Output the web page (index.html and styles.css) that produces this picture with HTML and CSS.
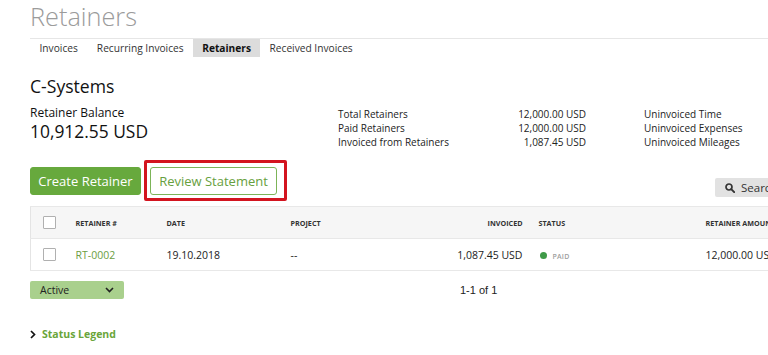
FILE: index.html
```html
<!DOCTYPE html>
<html>
<head>
<meta charset="utf-8">
<link rel="stylesheet" href="styles.css">
</head>
<body>
<div class="page">
  <div class="titlebar"><h1 class="title">Retainers</h1></div>
  <nav class="tabs">
    <span class="tab">Invoices</span>
    <span class="tab">Recurring Invoices</span>
    <span class="tab active">Retainers</span>
    <span class="tab">Received Invoices</span>
  </nav>
  <h2 class="client">C-Systems</h2>
  <div class="summary">
    <div class="balance">
      <div class="balance-label">Retainer Balance</div>
      <div class="balance-amount">10,912.55 USD</div>
    </div>
    <div class="totals">
      <div class="t-label">Total Retainers</div><div class="t-value">12,000.00 USD</div><div class="t-extra">Uninvoiced Time</div>
      <div class="t-label">Paid Retainers</div><div class="t-value">12,000.00 USD</div><div class="t-extra">Uninvoiced Expenses</div>
      <div class="t-label">Invoiced from Retainers</div><div class="t-value">1,087.45 USD</div><div class="t-extra">Uninvoiced Mileages</div>
    </div>
  </div>
  <div class="actions">
    <button class="btn btn-primary">Create Retainer</button>
    <div class="highlight-wrap">
      <button class="btn btn-outline">Review Statement</button>
      <span class="highlight"></span>
    </div>
    <button class="btn-search">
      <svg class="search-icon" width="10" height="10" viewBox="0 0 10 10"><circle cx="4" cy="4" r="3" fill="none" stroke="#333" stroke-width="1.7"/><line x1="6.2" y1="6.2" x2="9.2" y2="9.2" stroke="#333" stroke-width="1.9" stroke-linecap="round"/></svg>
      <span>Search</span>
    </button>
  </div>
  <table class="grid">
    <colgroup>
      <col class="c-check"><col class="c-num"><col class="c-date"><col class="c-proj"><col class="c-inv"><col class="c-status"><col class="c-amt">
    </colgroup>
    <thead>
      <tr>
        <th><span class="checkbox"></span></th>
        <th>Retainer #</th>
        <th>Date</th>
        <th>Project</th>
        <th class="right inv">Invoiced</th>
        <th class="status">Status</th>
        <th>Retainer Amount</th>
      </tr>
    </thead>
    <tbody>
      <tr>
        <td><span class="checkbox"></span></td>
        <td class="link">RT-0002</td>
        <td>19.10.2018</td>
        <td>--</td>
        <td class="right inv">1,087.45 USD</td>
        <td class="status"><span class="dot"></span><span class="paid">PAID</span></td>
        <td>12,000.00 USD</td>
      </tr>
    </tbody>
  </table>
  <div class="footer">
    <div class="select">
      <span>Active</span>
      <svg width="9" height="6" viewBox="0 0 9 6"><polyline points="1,1 4.5,4.5 8,1" fill="none" stroke="#222" stroke-width="1.6"/></svg>
    </div>
    <div class="pager">1-1 of 1</div>
  </div>
  <div class="legend">
    <svg width="6" height="9" viewBox="0 0 6 9"><polyline points="1,1 4.5,4.5 1,8" fill="none" stroke="#111" stroke-width="1.7"/></svg>
    <span>Status Legend</span>
  </div>
</div>
</body>
</html>
```
FILE: styles.css
```css
html, body {
  margin: 0;
  padding: 0;
  overflow: hidden;
  background: #fff;
}
body {
  font-family: "Open Sans", "Liberation Sans", sans-serif;
  color: #222;
  width: 768px;
  height: 355px;
}
.page {
  padding-left: 30px;
  width: 830px;
  white-space: nowrap;
}
.titlebar {
  border-bottom: 1px solid #e6e6e6;
  height: 38px;
}
.title {
  margin: 0;
  font-size: 25.3px;
  line-height: 32px;
  font-weight: 300;
  color: #9b9b9b;
}
.tabs {
  display: flex;
  height: 18px;
}
.tab {
  font-size: 10.2px;
  line-height: 18px;
  padding: 0 9.5px;
  color: #333;
}
.tab.active {
  background: #dcdcdc;
  font-weight: 700;
  color: #111;
  padding: 0 9px;
}
.client {
  margin: 17px 0 0;
  font-size: 17.6px;
  line-height: 24px;
  font-weight: 400;
  color: #111;
}
.summary {
  display: flex;
  margin-top: 7px;
}
.balance {
  width: 308px;
}
.balance-label {
  font-size: 12px;
  line-height: 15px;
  color: #111;
}
.balance-amount {
  font-size: 17.4px;
  line-height: 22px;
  color: #111;
}
.totals {
  display: grid;
  grid-template-columns: 170px 78px 150px;
  padding-top: 2px;
  font-size: 10px;
  line-height: 14px;
  color: #222;
}
.t-value {
  text-align: right;
}
.t-extra {
  padding-left: 58px;
}
.actions {
  display: flex;
  align-items: flex-end;
  margin-top: 18px;
  height: 29px;
}
.btn {
  font-family: "Open Sans", "Liberation Sans", sans-serif;
  font-size: 13px;
  height: 28px;
  border-radius: 3px;
  padding: 0 10px;
  margin: 0;
  line-height: 26px;
  white-space: nowrap;
  box-sizing: border-box;
}
.btn-primary {
  background: #67a93d;
  color: #fff;
  border: 1px solid #67a93d;
  width: 111px;
  padding: 0;
  align-self: flex-start;
}
.highlight-wrap {
  position: relative;
  margin-left: 9px;
  align-self: flex-start;
  height: 28px;
}
.btn-outline {
  background: #fff;
  color: #67a040;
  border: 1px solid #7cb458;
  width: 127px;
  padding: 0;
}
.highlight {
  position: absolute;
  left: -6px;
  top: -7px;
  width: 137px;
  height: 35px;
  border: 3px solid #d3141f;
  border-radius: 2px;
}
.btn-search {
  margin-left: 438px;
  flex: none;
  width: 90px;
  height: 19px;
  background: #e2e2e2;
  border: 0;
  border-radius: 2px;
  display: flex;
  align-items: center;
  padding: 0 0 0 10px;
  font-family: "Open Sans", "Liberation Sans", sans-serif;
  font-size: 11.5px;
  color: #333;
  margin-bottom: -1px;
}
.search-icon {
  margin-right: 6px;
}
.grid {
  margin-top: 10px;
  border-collapse: collapse;
  table-layout: fixed;
  width: 800px;
  border-left: 1px solid #e4e4e4;
}
.c-check { width: 35px; }
.c-num { width: 91px; }
.c-date { width: 124px; }
.c-proj { width: 150px; }
.c-inv { width: 100px; }
.c-status { width: 165px; }
.c-amt { width: 135px; }
.grid th, .grid td {
  padding: 0 10px;
  text-align: left;
  white-space: nowrap;
  overflow: hidden;
}
.grid th {
  height: 31px;
  background: #f6f6f6;
  border-top: 1px solid #e8e8e8;
  border-bottom: 1px solid #e8e8e8;
  font-size: 7.2px;
  font-weight: 700;
  text-transform: uppercase;
  color: #333;
}
.grid td {
  height: 31px;
  border-bottom: 1px solid #e8e8e8;
  font-size: 10.5px;
  color: #222;
}
.grid th:first-child, .grid td:first-child {
  padding-left: 12px;
}
.grid .right {
  text-align: right;
}
.grid .inv {
  padding-right: 8px;
}
.grid .status {
  padding-left: 8px;
}
.checkbox {
  display: block;
  width: 11px;
  height: 11px;
  border: 1px solid #b0b0b0;
  background: #fff;
  border-radius: 1px;
}
.grid .link {
  color: #6b9e42;
}
.dot {
  display: inline-block;
  width: 7px;
  height: 7px;
  border-radius: 50%;
  background: #3f9a48;
  margin-left: 1px;
  margin-right: 6px;
  vertical-align: middle;
}
.paid {
  font-size: 7px;
  color: #a0a0a0;
  font-weight: 600;
  vertical-align: middle;
  letter-spacing: 0.2px;
}
.footer {
  display: flex;
  align-items: center;
  margin-top: 10px;
}
.select {
  width: 94px;
  height: 18px;
  box-sizing: border-box;
  background: #a9d08d;
  border-radius: 2px;
  display: flex;
  align-items: center;
  justify-content: space-between;
  padding: 0 10px;
  font-size: 10.5px;
  color: #222;
}
.pager {
  margin-left: 336px;
  font-family: "Liberation Sans", Arial, sans-serif;
  font-size: 11px;
  color: #222;
}
.legend {
  display: flex;
  align-items: center;
  margin-top: 28px;
  font-size: 10.5px;
  font-weight: 700;
  color: #6aa53a;
}
.legend svg {
  margin-right: 6px;
}
```
